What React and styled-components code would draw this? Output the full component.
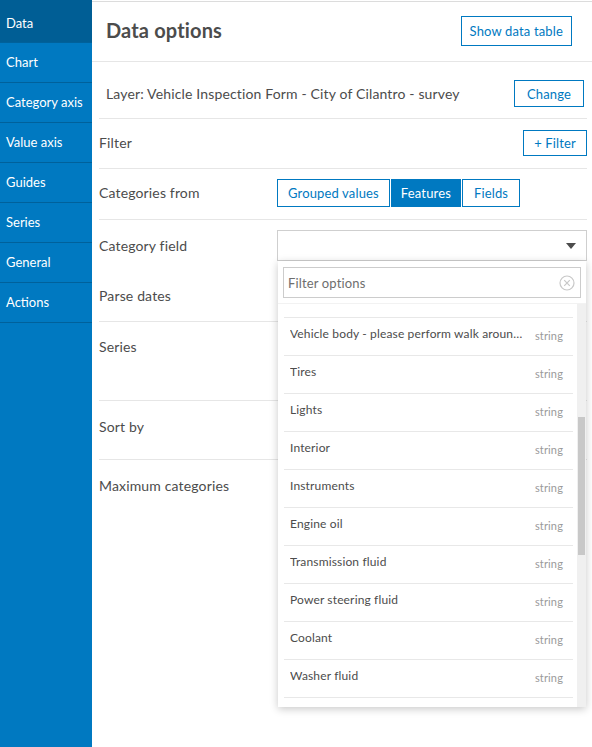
import React from 'react';
import styled, { createGlobalStyle } from 'styled-components';

const GlobalStyle = createGlobalStyle`
  html, body {
    margin: 0;
    padding: 0;
    background: #fff;
  }
  body {
    font-family: Lato, "Noto Sans", "Liberation Sans", sans-serif;
    letter-spacing: 0.15px;
    color: #4c4c4c;
  }
  * {
    box-sizing: border-box;
  }
`;

const tabs = ['Data', 'Chart', 'Category axis', 'Value axis', 'Guides', 'Series', 'General', 'Actions'];

// the part of the field list that is scrolled into view
const fields = [
  'Vehicle body - please perform walk around inspection',
  'Tires',
  'Lights',
  'Interior',
  'Instruments',
  'Engine oil',
  'Transmission fluid',
  'Power steering fluid',
  'Coolant',
  'Washer fluid'
];

export default function App() {
  return (
    <Layout>
      <GlobalStyle />
      <Sidebar>
        {tabs.map((t, i) => (
          <Tab key={t} $active={i === 0}>{t}</Tab>
        ))}
      </Sidebar>

      <Main>
        <Header>
          <Title>Data options</Title>
          <Button $h={30} $px={8}>Show data table</Button>
        </Header>

        <Form>
          <LayerRow>
            <span>Layer: Vehicle Inspection Form - City of Cilantro - survey</span>
            <Button $h={27} $px={12}>Change</Button>
          </LayerRow>

          <Row $pt={11} $pb={12} $center>
            <Label>Filter</Label>
            <Control $end>
              <Button $h={26} $px={10}>+ Filter</Button>
            </Control>
          </Row>

          <Row $pt={10} $pb={12} $center>
            <Label>Categories from</Label>
            <Control>
              <Segments>
                <Segment $px={10}>Grouped values</Segment>
                <Segment $px={9} $on>Features</Segment>
                <Segment $px={11}>Fields</Segment>
              </Segments>
            </Control>
          </Row>

          <Row $pt={10} $pb={9} $center $plain>
            <Label>Category field</Label>
            <Control>
              <SelectWrap>
                <Select>
                  <svg width="10" height="6" viewBox="0 0 10 6">
                    <path d="M0 0 L10 0 L5 6 Z" fill="#4c4c4c" />
                  </svg>
                </Select>
                <Popup>
                  <FilterBox>
                    <FilterInput>
                      <span>Filter options</span>
                      <svg width="16" height="16" viewBox="0 0 16 16">
                        <circle cx="8" cy="8" r="7" fill="none" stroke="#c8c8c8" strokeWidth="1.2" />
                        <path d="M5.2 5.2 L10.8 10.8 M10.8 5.2 L5.2 10.8" stroke="#c8c8c8" strokeWidth="1.2" />
                      </svg>
                    </FilterInput>
                  </FilterBox>
                  <ListArea>
                    <List>
                      <ClippedItem />
                      {fields.map((f) => (
                        <Item key={f}>
                          <Name>{f}</Name>
                          <Type>string</Type>
                        </Item>
                      ))}
                    </List>
                    <Track>
                      <Thumb />
                    </Track>
                  </ListArea>
                </Popup>
              </SelectWrap>
            </Control>
          </Row>

          <Row $pt={16} $pb={15}>
            <Label>Parse dates</Label>
          </Row>

          <Row $pt={15} $h={79}>
            <Label>Series</Label>
          </Row>

          <Row $pt={16} $h={59}>
            <Label>Sort by</Label>
          </Row>

          <Row $pt={16} $plain>
            <Label>Maximum categories</Label>
          </Row>
        </Form>
      </Main>
    </Layout>
  );
}

const Layout = styled.div`
  display: flex;
  min-height: 747px;
`;

const Sidebar = styled.nav`
  width: 92px;
  flex-shrink: 0;
  background: #0079c1;
  display: flex;
  flex-direction: column;
`;

const Tab = styled.div`
  height: 40px;
  padding: 0 6px 1px;
  display: flex;
  align-items: center;
  color: #fff;
  font-size: 13px;
  letter-spacing: 0;
  border-bottom: 1px solid #00619b;
  background: ${(p) => (p.$active ? '#005e95' : 'transparent')};

  &:first-child {
    height: 43px;
    padding-top: 4px;
  }
`;

const Main = styled.main`
  flex: 1;
  margin-top: 1px;
  border-top: 1px solid #dcdcdc;
`;

const Header = styled.header`
  height: 60px;
  display: flex;
  align-items: center;
  justify-content: space-between;
  padding: 0 20px 1px 14px;
  border-bottom: 1px solid #e6e6e6;
`;

const Title = styled.h2`
  margin: 0 0 2px;
  font-size: 20px;
  font-weight: 700;
  color: #4c4c4c;
`;

const Button = styled.button`
  height: ${(p) => p.$h}px;
  padding: 0 ${(p) => p.$px}px;
  border: 1px solid #0079c1;
  background: #fff;
  color: #0079c1;
  font-family: inherit;
  letter-spacing: inherit;
  font-size: 13px;
  cursor: pointer;
`;

const Form = styled.section`
  padding: 0 5px 0 7px;
`;

const LayerRow = styled.div`
  display: flex;
  align-items: center;
  justify-content: space-between;
  padding: 18px 3px 11px 7px;
  font-size: 14px;
  border-bottom: 1px solid #e6e6e6;
`;

const Row = styled.div`
  display: grid;
  grid-template-columns: 178px 1fr;
  align-items: ${(p) => (p.$center ? 'center' : 'start')};
  padding-top: ${(p) => p.$pt || 0}px;
  padding-bottom: ${(p) => p.$pb || 0}px;
  height: ${(p) => (p.$h ? `${p.$h}px` : 'auto')};
  border-bottom: ${(p) => (p.$plain ? 'none' : '1px solid #e6e6e6')};
`;

const Label = styled.div`
  font-size: 14px;
  line-height: 20px;
  color: #4c4c4c;
`;

const Control = styled.div`
  display: flex;
  justify-content: ${(p) => (p.$end ? 'flex-end' : 'flex-start')};
`;

const Segments = styled.div`
  display: flex;
  gap: 1px;
`;

const Segment = styled.button`
  height: 28px;
  padding: 0 ${(p) => p.$px}px;
  border: 1px solid #0079c1;
  background: ${(p) => (p.$on ? '#0079c1' : '#fff')};
  color: ${(p) => (p.$on ? '#fff' : '#0079c1')};
  font-family: inherit;
  letter-spacing: inherit;
  font-size: 13px;
`;

const SelectWrap = styled.div`
  position: relative;
  width: 310px;
`;

const Select = styled.div`
  height: 31px;
  border: 1px solid #cfcfcf;
  display: flex;
  align-items: center;
  justify-content: flex-end;
  padding-right: 10px;
`;

const Popup = styled.div`
  position: absolute;
  top: 31px;
  left: 1px;
  width: 308px;
  background: #fff;
  box-shadow: 0 2px 8px rgba(0, 0, 0, 0.22);
  z-index: 10;
`;

const FilterBox = styled.div`
  padding: 6px 5px 5px;
  border-bottom: 1px solid #f2f2f2;
`;

const FilterInput = styled.div`
  height: 31px;
  border: 1px solid #cccccc;
  display: flex;
  align-items: center;
  justify-content: space-between;
  padding: 0 5px 0 4px;
  font-size: 13px;
  color: #6e6e6e;
`;

const ListArea = styled.div`
  display: flex;
  height: 403px;
`;

const List = styled.div`
  flex: 1;
  min-width: 0;
  overflow: hidden;
  padding: 2px 4px 0 6px;
`;

const ClippedItem = styled.div`
  height: 12px;
  border-bottom: 1px solid #e8e8e8;
`;

const Track = styled.div`
  width: 9px;
  flex-shrink: 0;
  background: #f0f0f0;
  padding: 113px 1px 0;
`;

const Thumb = styled.div`
  height: 138px;
  background: #c8c8c8;
`;

const Item = styled.div`
  height: 38px;
  display: flex;
  align-items: center;
  padding: 0 10px 6px 6px;
  border-bottom: 1px solid #e8e8e8;
`;

const Name = styled.span`
  flex: 1;
  min-width: 0;
  overflow: hidden;
  white-space: nowrap;
  text-overflow: ellipsis;
  font-size: 12px;
  color: #4c4c4c;
  margin-right: 6px;
`;

const Type = styled.span`
  font-size: 11px;
  color: #9a9a9a;
  margin-top: 3px;
`;
